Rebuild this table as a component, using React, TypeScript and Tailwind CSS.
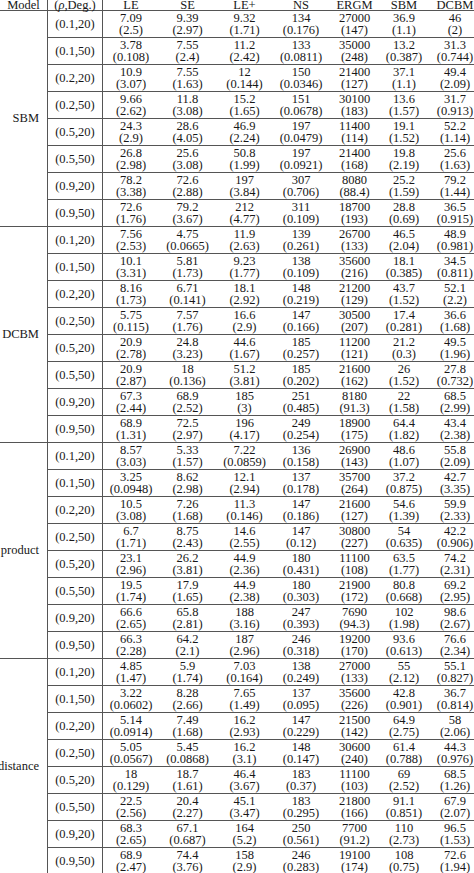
import React from "react";

type Group = { name: string; rows: { key: string; cells: string[] }[] };

const raw: [string, string[]][] = [
  [
    "SBM",
    [
      "(0.1,20)|7.09 (2.5)|9.39 (2.97)|9.32 (1.71)|134 (0.176)|27000 (147)|36.9 (1.1)|46 (2)",
      "(0.1,50)|3.78 (0.108)|7.55 (2.4)|11.2 (2.42)|133 (0.0811)|35000 (248)|13.2 (0.387)|31.3 (0.744)",
      "(0.2,20)|10.9 (3.07)|7.55 (1.63)|12 (0.144)|150 (0.0346)|21400 (127)|37.1 (1.1)|49.4 (2.09)",
      "(0.2,50)|9.66 (2.62)|11.8 (3.08)|15.2 (1.65)|151 (0.0678)|30100 (183)|13.6 (1.57)|31.7 (0.913)",
      "(0.5,20)|24.3 (2.9)|28.6 (4.05)|46.9 (2.24)|197 (0.0479)|11400 (114)|19.1 (1.52)|52.2 (1.14)",
      "(0.5,50)|26.8 (2.98)|25.6 (3.08)|50.8 (1.99)|197 (0.0921)|21400 (168)|19.8 (2.19)|25.6 (1.63)",
      "(0.9,20)|78.2 (3.38)|72.6 (2.88)|197 (3.84)|307 (0.706)|8080 (88.4)|25.2 (1.59)|79.2 (1.44)",
      "(0.9,50)|72.6 (1.76)|79.2 (3.67)|212 (4.77)|311 (0.109)|18700 (193)|28.8 (0.69)|36.5 (0.915)",
    ],
  ],
  [
    "DCBM",
    [
      "(0.1,20)|7.56 (2.53)|4.75 (0.0665)|11.9 (2.63)|139 (0.261)|26700 (133)|46.5 (2.04)|48.9 (0.981)",
      "(0.1,50)|10.1 (3.31)|5.81 (1.73)|9.23 (1.77)|138 (0.109)|35600 (216)|18.1 (0.385)|34.5 (0.811)",
      "(0.2,20)|8.16 (1.73)|6.71 (0.141)|18.1 (2.92)|148 (0.219)|21200 (129)|43.7 (1.52)|52.1 (2.2)",
      "(0.2,50)|5.75 (0.115)|7.57 (1.76)|16.6 (2.9)|147 (0.166)|30500 (207)|17.4 (0.281)|36.6 (1.68)",
      "(0.5,20)|20.9 (2.78)|24.8 (3.23)|44.6 (1.67)|185 (0.257)|11200 (121)|21.2 (0.3)|49.5 (1.96)",
      "(0.5,50)|20.9 (2.87)|18 (0.136)|51.2 (3.81)|185 (0.202)|21600 (162)|26 (1.52)|27.8 (0.732)",
      "(0.9,20)|67.3 (2.44)|68.9 (2.52)|185 (3)|251 (0.485)|8180 (91.3)|22 (1.58)|68.5 (2.99)",
      "(0.9,50)|68.9 (1.31)|72.5 (2.97)|196 (4.17)|249 (0.254)|18900 (175)|64.4 (1.82)|43.4 (2.38)",
    ],
  ],
  [
    "product",
    [
      "(0.1,20)|8.57 (3.03)|5.33 (1.57)|7.22 (0.0859)|136 (0.158)|26900 (143)|48.6 (1.07)|55.8 (2.09)",
      "(0.1,50)|3.25 (0.0948)|8.62 (2.98)|12.1 (2.94)|137 (0.178)|35700 (264)|37.2 (0.875)|42.7 (3.35)",
      "(0.2,20)|10.5 (3.08)|7.26 (1.68)|11.3 (0.146)|147 (0.186)|21600 (127)|54.6 (1.39)|59.9 (2.33)",
      "(0.2,50)|6.7 (1.71)|8.75 (2.43)|14.6 (2.55)|147 (0.12)|30800 (227)|54 (0.635)|42.2 (0.906)",
      "(0.5,20)|23.1 (2.96)|26.2 (3.81)|44.9 (2.36)|180 (0.431)|11100 (108)|63.5 (1.77)|74.2 (2.31)",
      "(0.5,50)|19.5 (1.74)|17.9 (1.65)|44.9 (2.38)|180 (0.303)|21900 (172)|80.8 (0.668)|69.2 (2.95)",
      "(0.9,20)|66.6 (2.65)|65.8 (2.81)|188 (3.16)|247 (0.393)|7690 (94.3)|102 (1.98)|98.6 (2.67)",
      "(0.9,50)|66.3 (2.28)|64.2 (2.1)|187 (2.96)|246 (0.318)|19200 (170)|93.6 (0.613)|76.6 (2.34)",
    ],
  ],
  [
    "distance",
    [
      "(0.1,20)|4.85 (1.47)|5.9 (1.74)|7.03 (0.164)|138 (0.249)|27000 (133)|55 (2.12)|55.1 (0.827)",
      "(0.1,50)|3.22 (0.0602)|8.28 (2.66)|7.65 (1.49)|137 (0.095)|35600 (226)|42.8 (0.901)|36.7 (0.814)",
      "(0.2,20)|5.14 (0.0914)|7.49 (1.68)|16.2 (2.93)|147 (0.229)|21500 (142)|64.9 (2.75)|58 (2.06)",
      "(0.2,50)|5.05 (0.0567)|5.45 (0.0868)|16.2 (3.1)|148 (0.147)|30600 (240)|61.4 (0.788)|44.3 (0.976)",
      "(0.5,20)|18 (0.129)|18.7 (1.61)|46.4 (3.67)|183 (0.37)|11100 (103)|69 (2.52)|68.5 (1.26)",
      "(0.5,50)|22.5 (2.56)|20.4 (2.27)|45.1 (3.47)|183 (0.295)|21800 (166)|91.1 (0.851)|67.9 (2.07)",
      "(0.9,20)|68.3 (2.65)|67.1 (0.687)|164 (5.2)|250 (0.561)|7700 (91.2)|110 (2.73)|96.5 (1.53)",
      "(0.9,50)|68.9 (2.47)|74.4 (3.76)|158 (2.9)|246 (0.283)|19100 (174)|108 (0.75)|72.6 (1.94)",
    ],
  ],
];

const groups: Group[] = raw.map(([name, rows]) => ({
  name,
  rows: rows.map((r) => {
    const parts = r.split("|");
    return { key: parts[0], cells: parts.slice(1) };
  }),
}));

const colW = ["w-[56px]", "w-[57px]", "w-[57px]", "w-[56px]", "w-[51px]", "w-[48px]", "w-[54px]"];
const heads = ["LE", "SE", "LE+", "NS", "ERGM", "SBM", "DCBM"];

function DataCells({ cells }: { cells: string[] }) {
  return (
    <>
      {cells.map((c, i) => {
        const [a, b] = c.split(" ");
        return (
          <div
            key={i}
            className={`${colW[i]} shrink-0 flex flex-col items-center justify-center leading-[12.5px] whitespace-nowrap`}
          >
            <span>{a}</span>
            <span>{b}</span>
          </div>
        );
      })}
    </>
  );
}

export default function App() {
  return (
    <div className="w-[474px] h-[873px] overflow-hidden bg-white">
      <div
        className="w-[482px] text-[12.5px] text-[#181818]"
        style={{ fontFamily: '"Liberation Serif", "Times New Roman", serif' }}
      >
        {/* header */}
        <div className="flex h-[11px] border-b border-[#555] leading-[11px]">
          <div className="w-[48px] shrink-0 border-r border-[#555] flex justify-center">
            Model
          </div>
          <div className="w-[55px] shrink-0 border-r border-[#555] flex justify-center">
            (<i>ρ</i>,Deg.)
          </div>
          {heads.map((h, i) => (
            <div key={h} className={`${colW[i]} shrink-0 flex justify-center`}>
              {h}
            </div>
          ))}
        </div>
        {groups.map((g, gi) => (
          <div key={g.name} className={`flex ${gi < groups.length - 1 ? "border-b border-[#555]" : ""}`}>
            <div className="w-[48px] shrink-0 border-r border-[#555] flex items-center justify-end pr-[8px] overflow-hidden whitespace-nowrap">
              {g.name}
            </div>
            <div className="flex flex-col">
              {g.rows.map((r, ri) => (
                <div
                  key={r.key}
                  className={`flex ${ri < g.rows.length - 1 ? "h-[27px] border-b border-[#555]" : "h-[26px]"}`}
                >
                  <div className="w-[55px] shrink-0 border-r border-[#555] flex items-center justify-center whitespace-nowrap">
                    {r.key}
                  </div>
                  <DataCells cells={r.cells} />
                </div>
              ))}
            </div>
          </div>
        ))}
      </div>
    </div>
  );
}
